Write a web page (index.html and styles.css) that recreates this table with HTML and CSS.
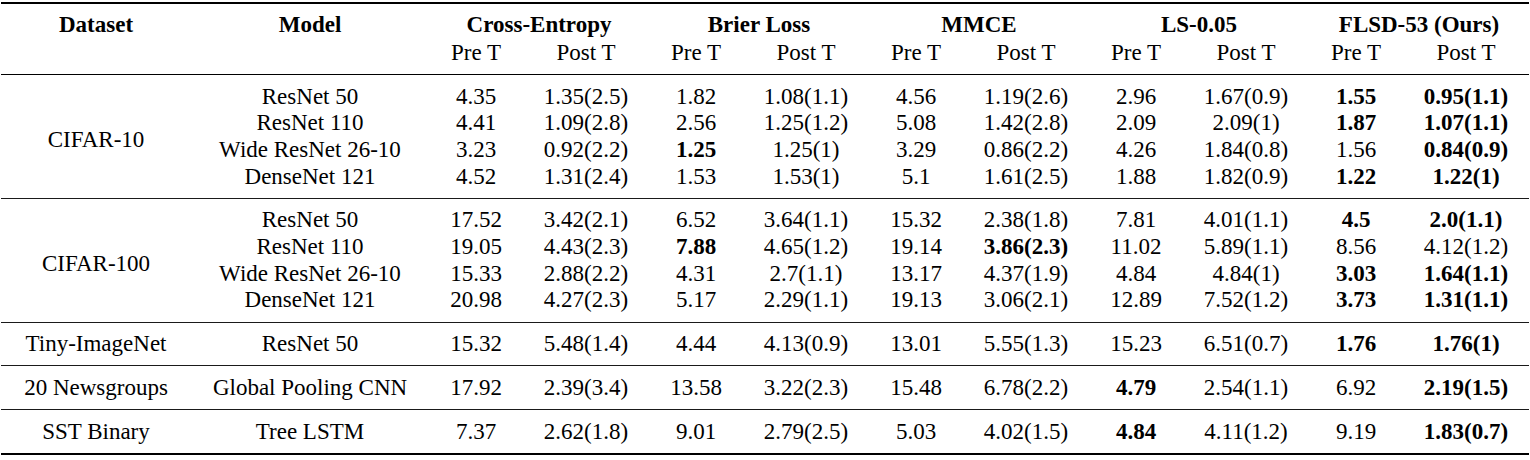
FILE: index.html
```html
<!DOCTYPE html>
<html lang="en">
<head>
<meta charset="utf-8">
<title>Calibration results</title>
<link rel="stylesheet" href="styles.css">
</head>
<body>
<table class="results">
  <colgroup>
    <col class="c-ds"><col class="c-model">
    <col class="c-pre"><col class="c-post">
    <col class="c-pre"><col class="c-post">
    <col class="c-pre"><col class="c-post">
    <col class="c-pre"><col class="c-post">
    <col class="c-pre"><col class="c-post">
  </colgroup>
  <thead>
    <tr class="hrow1">
      <th>Dataset</th><th>Model</th>
      <th colspan="2">Cross-Entropy</th>
      <th colspan="2">Brier Loss</th>
      <th colspan="2">MMCE</th>
      <th colspan="2">LS-0.05</th>
      <th colspan="2">FLSD-53 (Ours)</th>
    </tr>
    <tr class="hrow2">
      <th></th><th></th>
      <th>Pre T</th><th>Post T</th>
      <th>Pre T</th><th>Post T</th>
      <th>Pre T</th><th>Post T</th>
      <th>Pre T</th><th>Post T</th>
      <th>Pre T</th><th>Post T</th>
    </tr>
  </thead>
  <tbody>
    <tr class="first">
      <td rowspan="4" class="ds">CIFAR-10</td><td>ResNet 50</td>
      <td>4.35</td><td>1.35(2.5)</td><td>1.82</td><td>1.08(1.1)</td><td>4.56</td><td>1.19(2.6)</td><td>2.96</td><td>1.67(0.9)</td><td class="b">1.55</td><td class="b">0.95(1.1)</td>
    </tr>
    <tr>
      <td>ResNet 110</td>
      <td>4.41</td><td>1.09(2.8)</td><td>2.56</td><td>1.25(1.2)</td><td>5.08</td><td>1.42(2.8)</td><td>2.09</td><td>2.09(1)</td><td class="b">1.87</td><td class="b">1.07(1.1)</td>
    </tr>
    <tr>
      <td>Wide ResNet 26-10</td>
      <td>3.23</td><td>0.92(2.2)</td><td class="b">1.25</td><td>1.25(1)</td><td>3.29</td><td>0.86(2.2)</td><td>4.26</td><td>1.84(0.8)</td><td>1.56</td><td class="b">0.84(0.9)</td>
    </tr>
    <tr class="last">
      <td>DenseNet 121</td>
      <td>4.52</td><td>1.31(2.4)</td><td>1.53</td><td>1.53(1)</td><td>5.1</td><td>1.61(2.5)</td><td>1.88</td><td>1.82(0.9)</td><td class="b">1.22</td><td class="b">1.22(1)</td>
    </tr>
  </tbody>
  <tbody>
    <tr class="first">
      <td rowspan="4" class="ds">CIFAR-100</td><td>ResNet 50</td>
      <td>17.52</td><td>3.42(2.1)</td><td>6.52</td><td>3.64(1.1)</td><td>15.32</td><td>2.38(1.8)</td><td>7.81</td><td>4.01(1.1)</td><td class="b">4.5</td><td class="b">2.0(1.1)</td>
    </tr>
    <tr>
      <td>ResNet 110</td>
      <td>19.05</td><td>4.43(2.3)</td><td class="b">7.88</td><td>4.65(1.2)</td><td>19.14</td><td class="b">3.86(2.3)</td><td>11.02</td><td>5.89(1.1)</td><td>8.56</td><td>4.12(1.2)</td>
    </tr>
    <tr>
      <td>Wide ResNet 26-10</td>
      <td>15.33</td><td>2.88(2.2)</td><td>4.31</td><td>2.7(1.1)</td><td>13.17</td><td>4.37(1.9)</td><td>4.84</td><td>4.84(1)</td><td class="b">3.03</td><td class="b">1.64(1.1)</td>
    </tr>
    <tr class="last">
      <td>DenseNet 121</td>
      <td>20.98</td><td>4.27(2.3)</td><td>5.17</td><td>2.29(1.1)</td><td>19.13</td><td>3.06(2.1)</td><td>12.89</td><td>7.52(1.2)</td><td class="b">3.73</td><td class="b">1.31(1.1)</td>
    </tr>
  </tbody>
  <tbody>
    <tr class="first last">
      <td class="ds">Tiny-ImageNet</td><td>ResNet 50</td>
      <td>15.32</td><td>5.48(1.4)</td><td>4.44</td><td>4.13(0.9)</td><td>13.01</td><td>5.55(1.3)</td><td>15.23</td><td>6.51(0.7)</td><td class="b">1.76</td><td class="b">1.76(1)</td>
    </tr>
  </tbody>
  <tbody>
    <tr class="first last">
      <td class="ds">20 Newsgroups</td><td>Global Pooling CNN</td>
      <td>17.92</td><td>2.39(3.4)</td><td>13.58</td><td>3.22(2.3)</td><td>15.48</td><td>6.78(2.2)</td><td class="b">4.79</td><td>2.54(1.1)</td><td>6.92</td><td class="b">2.19(1.5)</td>
    </tr>
  </tbody>
  <tbody class="final">
    <tr class="first last">
      <td class="ds">SST Binary</td><td>Tree LSTM</td>
      <td>7.37</td><td>2.62(1.8)</td><td>9.01</td><td>2.79(2.5)</td><td>5.03</td><td>4.02(1.5)</td><td class="b">4.84</td><td>4.11(1.2)</td><td>9.19</td><td class="b">1.83(0.7)</td>
    </tr>
  </tbody>
</table>
</body>
</html>
```

FILE: styles.css
```css
html, body {
  margin: 0;
  padding: 0;
  background: #ffffff;
}

body {
  font-family: "Liberation Serif", "Times New Roman", Times, serif;
  color: #000000;
}

.results {
  border-collapse: collapse;
  table-layout: fixed;
  width: 1528px;
  margin: 2px 1px 0 1px;
  font-size: 23px;
  line-height: 26.7px;
}

.c-ds { width: 190px; }
.c-model { width: 238px; }
.c-pre { width: 94px; }
.c-post { width: 126px; }

.results th,
.results td {
  padding: 0;
  text-align: center;
  white-space: nowrap;
  vertical-align: middle;
}

.results thead {
  border-top: 2px solid #000;
  border-bottom: 1px solid #000;
}

.results thead th {
  line-height: 28px;
}

.results .hrow1 th {
  font-weight: 700;
  padding-top: 7px;
}

.results .hrow2 th {
  font-weight: 400;
  padding-bottom: 7px;
}

.results tbody {
  border-bottom: 1px solid #1a1a1a;
}

.results tbody.final {
  border-bottom: 2px solid #000;
}

.results tr.first td {
  padding-top: 8.5px;
}

.results tr.last td {
  padding-bottom: 7.5px;
}

.results td.ds {
  padding-top: 0;
  padding-bottom: 0;
}

.results td.b {
  font-weight: 700;
}
```
